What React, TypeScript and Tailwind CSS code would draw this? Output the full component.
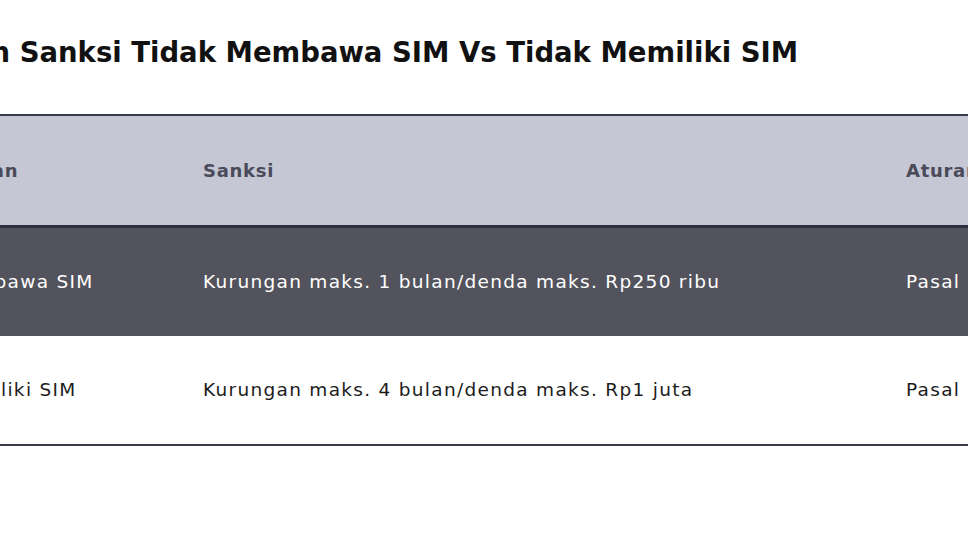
import React from 'react';

const ROWS = [
  {
    violation: 'Tidak Membawa SIM',
    sanction: 'Kurungan maks. 1 bulan/denda maks. Rp250 ribu',
    rule: 'Pasal 288 ayat 2 UU LLAJ',
    dark: true,
  },
  {
    violation: 'Tidak Memiliki SIM',
    sanction: 'Kurungan maks. 4 bulan/denda maks. Rp1 juta',
    rule: 'Pasal 281 UU LLAJ',
    dark: false,
  },
];

export default function App() {
  return (
    <div
      className="w-[968px] h-[543px] bg-white overflow-hidden"
      style={{ fontFamily: '"DejaVu Sans", Inter, sans-serif' }}
    >
      <h2 className="ml-[-157px] pt-[32px] whitespace-nowrap text-[27.5px] leading-[40px] font-bold text-[#111111]">
        Perbedaan Sanksi Tidak Membawa SIM Vs Tidak Memiliki SIM
      </h2>

      <div className="ml-[-142px] mt-[42px] w-[1400px] border-t-2 border-b-2 border-[#3b3b4b]">
        {/* header */}
        <div className="grid grid-cols-[321px_703px_1fr] h-[112px] items-center bg-[#c5c7d4] border-b-[3px] border-[#2f2f3f] text-[18px] font-semibold tracking-[0.04em] text-[#4a4a5a]">
          <div className="px-6 whitespace-nowrap">Pelanggaran</div>
          <div className="px-6 whitespace-nowrap">Sanksi</div>
          <div className="px-6 whitespace-nowrap">Aturan</div>
        </div>

        {ROWS.map((row) => (
          <div
            key={row.violation}
            className={`grid grid-cols-[321px_703px_1fr] h-[108px] items-center text-[18.5px] tracking-[0.07em] ${
              row.dark ? 'bg-[#53535d] text-white' : 'bg-white text-[#1c1c1c]'
            }`}
          >
            <div className="px-6 whitespace-nowrap">{row.violation}</div>
            <div className="px-6 whitespace-nowrap">{row.sanction}</div>
            <div className="px-6 whitespace-nowrap">{row.rule}</div>
          </div>
        ))}
      </div>
    </div>
  );
}
